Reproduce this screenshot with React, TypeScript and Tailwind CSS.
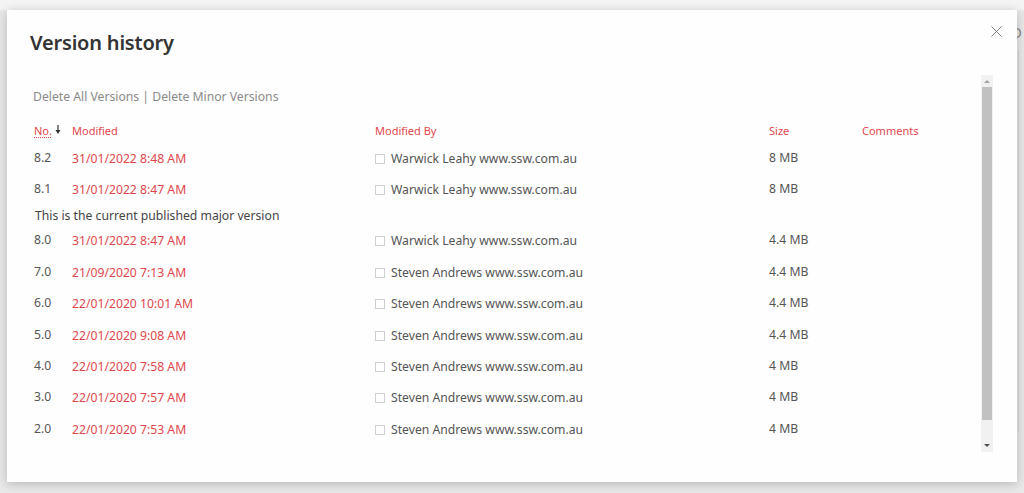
import { X } from "lucide-react";

type Version = {
  no: string;
  modified: string;
  by: string;
  size: string;
  note?: string;
};

const versions: Version[] = [
  { no: "8.2", modified: "31/01/2022 8:48 AM", by: "Warwick Leahy www.ssw.com.au", size: "8 MB" },
  { no: "8.1", modified: "31/01/2022 8:47 AM", by: "Warwick Leahy www.ssw.com.au", size: "8 MB" },
  {
    no: "8.0",
    modified: "31/01/2022 8:47 AM",
    by: "Warwick Leahy www.ssw.com.au",
    size: "4.4 MB",
    note: "This is the current published major version",
  },
  { no: "7.0", modified: "21/09/2020 7:13 AM", by: "Steven Andrews www.ssw.com.au", size: "4.4 MB" },
  { no: "6.0", modified: "22/01/2020 10:01 AM", by: "Steven Andrews www.ssw.com.au", size: "4.4 MB" },
  { no: "5.0", modified: "22/01/2020 9:08 AM", by: "Steven Andrews www.ssw.com.au", size: "4.4 MB" },
  { no: "4.0", modified: "22/01/2020 7:58 AM", by: "Steven Andrews www.ssw.com.au", size: "4 MB" },
  { no: "3.0", modified: "22/01/2020 7:57 AM", by: "Steven Andrews www.ssw.com.au", size: "4 MB" },
  { no: "2.0", modified: "22/01/2020 7:53 AM", by: "Steven Andrews www.ssw.com.au", size: "4 MB" },
];

const font = { fontFamily: '"Noto Sans", "Open Sans", sans-serif' };

function SortArrow() {
  return (
    <svg width="6" height="9" viewBox="0 0 6 9" className="-translate-y-[2px]">
      <line x1="3" y1="0" x2="3" y2="6" stroke="#333" strokeWidth="1.2" />
      <path d="M0.5 5 L3 9 L5.5 5 Z" fill="#333" />
    </svg>
  );
}

function VersionRow({ v }: { v: Version }) {
  return (
    <>
      {v.note && (
        <div className="h-[20px] flex items-center pl-[2px] text-[12.2px] text-[#444]">
          {v.note}
        </div>
      )}
      <div className="h-[31.4px] flex items-center text-[12.2px]">
        <div className="w-[39px] pl-[1px] text-[#555] -translate-y-[1px]">{v.no}</div>
        <div className="w-[303px] text-[#e0474c]">{v.modified}</div>
        <div className="w-[394px] flex items-center">
          <span className="w-[10px] h-[10px] border border-[#d0d0d0] mr-[6px] shrink-0" />
          <span className="text-[#555]">{v.by}</span>
        </div>
        <div className="w-[93px] text-[#555] -translate-y-[1px]">{v.size}</div>
        <div className="flex-1" />
      </div>
    </>
  );
}

export default function App() {
  return (
    <div className="relative w-[1024px] h-[493px] overflow-hidden bg-[#e9e9e9]" style={font}>
      <div className="h-[10px] bg-[#f4f4f4]" />
      <div className="absolute left-[1011px] top-[21px] text-[15px] text-[#888]">D</div>
      <div className="absolute right-[5px] top-[50px] bottom-[60px] w-px bg-[#d8d8d8]" />

      <div className="absolute left-[7px] top-[10px] w-[1010px] h-[472px] bg-[#fefefe] shadow-[0_2px_10px_rgba(0,0,0,0.22)] flex flex-col">
        <div className="h-[65px] flex items-start justify-between pl-[23px] pr-[11px]">
          <h1 className="mt-[18px] text-[20px] font-semibold text-[#333] tracking-[-0.2px]">
            Version history
          </h1>
          <button type="button" className="mt-[12px] text-[#7a7a7a]">
            <X className="w-[19px] h-[19px]" strokeWidth={1.2} />
          </button>
        </div>

        <div className="flex h-[377px]">
          <div className="flex-1 pl-[26px]">
            <div className="h-[44px] flex items-center text-[12.2px] text-[#8a8a8a]">
              Delete All Versions | Delete Minor Versions
            </div>
            <div className="h-[24px] flex items-center text-[11px] text-[#e0474c]">
              <div className="w-[39px] pl-[1px] flex items-center gap-[3px]">
                <span className="underline decoration-dotted underline-offset-2">No.</span>
                <SortArrow />
              </div>
              <div className="w-[303px]">Modified</div>
              <div className="w-[394px]">Modified By</div>
              <div className="w-[93px]">Size</div>
              <div>Comments</div>
            </div>
            {versions.map((v) => (
              <VersionRow key={v.no} v={v} />
            ))}
          </div>

          <div className="w-[12px] mr-[24px] flex flex-col bg-[#f1f1f1]">
            <div className="h-[12px] flex items-center justify-center">
              <span className="w-0 h-0 border-l-[3px] border-r-[3px] border-b-[3px] border-l-transparent border-r-transparent border-b-[#a3a3a3]" />
            </div>
            <div className="h-[333px] mx-[1px] bg-[#c1c1c1]" />
            <div className="flex-1 flex items-end justify-center pb-[5px]">
              <span className="w-0 h-0 border-l-[3px] border-r-[3px] border-t-[3px] border-l-transparent border-r-transparent border-t-[#505050]" />
            </div>
          </div>
        </div>
      </div>
    </div>
  );
}
